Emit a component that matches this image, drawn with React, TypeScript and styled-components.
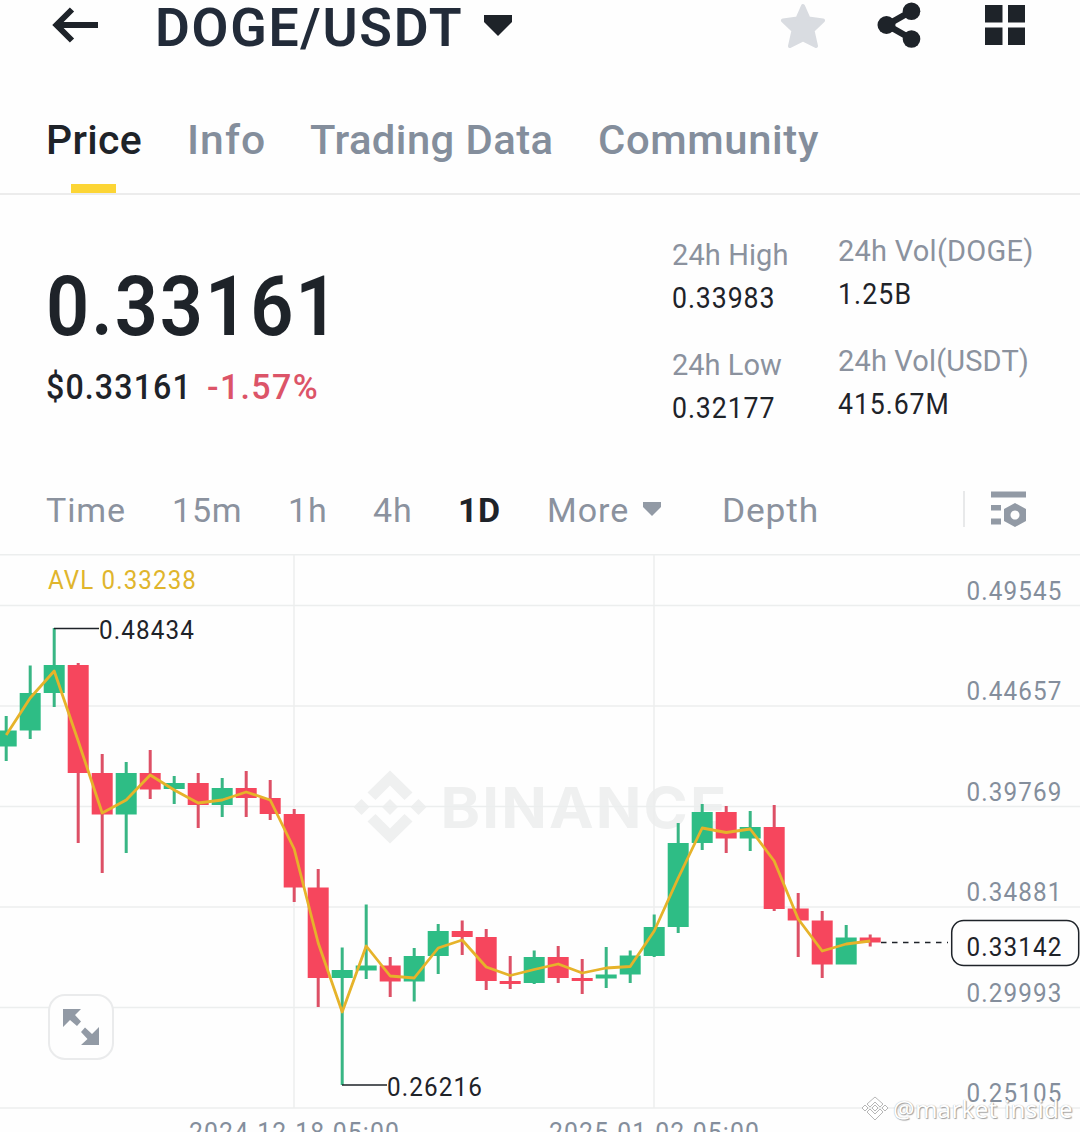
import React from "react";
import styled, { createGlobalStyle } from "styled-components";

const ink = "#1e2329";
const muted = "#848e9c";
const line = "#ececec";
const grid = "#eceeee";
const green = "#2ebd85";
const red = "#f6465d";
const amber = "#e6b32a";
const sans = `Roboto, "Liberation Sans", sans-serif`;

const GlobalStyle = createGlobalStyle`
  body {
    margin: 0;
    background: #fefefe;
    font-family: ${sans};
    color: ${ink};
  }
`;

const Screen = styled.main`
  display: flex;
  flex-direction: column;
  width: 1080px;
  height: 1132px;
  overflow: hidden;
  background: #fefefe;
`;

const Fit = styled.span<{ $sx?: number; $ls?: number }>`
  display: inline-block;
  white-space: nowrap;
  transform-origin: left center;
  transform: scaleX(${(p) => p.$sx ?? 1});
  letter-spacing: ${(p) => p.$ls ?? 0}px;
`;

const Header = styled.header`
  display: flex;
  align-items: center;
  height: 50px;
  padding: 0 54px 0 52px;
`;

const Title = styled.h1`
  width: 329px;
  margin: 6px 0 0 56px;
  font-size: 53px;
  line-height: 56px;
  font-weight: 600;
  color: #222b39;
`;

const Actions = styled.div`
  display: flex;
  align-items: center;
  margin-left: auto;
`;

const ActionIcon = styled.svg<{ $gap?: number }>`
  display: block;
  margin-left: ${(p) => p.$gap ?? 0}px;
`;

const Tabs = styled.nav`
  display: flex;
  height: 77px;
  padding: 66px 0 0 46px;
  border-bottom: 2px solid ${line};
`;

const Tab = styled.a<{ $w: number; $active?: boolean }>`
  position: relative;
  width: ${(p) => p.$w}px;
  font-size: 41px;
  line-height: 48px;
  font-weight: 500;
  color: ${(p) => (p.$active ? ink : muted)};
  &::after {
    content: "";
    display: ${(p) => (p.$active ? "block" : "none")};
    position: absolute;
    left: 25px;
    bottom: 0;
    width: 45px;
    height: 9px;
    background: #fcd535;
  }
`;

const Summary = styled.section`
  display: flex;
  height: 273px;
`;

const PriceBlock = styled.div`
  width: 626px;
  padding: 70px 0 0 46px;
`;

const LastPrice = styled.div`
  font-size: 84px;
  line-height: 84px;
  font-weight: 600;
`;

const SubPrice = styled.div`
  display: flex;
  margin-top: 19px;
  font-size: 35px;
  line-height: 40px;
  font-weight: 500;
`;

const Fiat = styled.span`
  width: 161px;
`;

const Change = styled.span`
  color: #dc5468;
`;

const StatColumn = styled.dl<{ $w: number; $top: number }>`
  width: ${(p) => p.$w}px;
  margin: 0;
  padding-top: ${(p) => p.$top}px;
  font-size: 29px;
  line-height: 34px;
`;

const StatLabel = styled.dt`
  color: #8b929e;
`;

const StatValue = styled.dd`
  margin: 9px 0 33px;
`;

const Intervals = styled.nav`
  display: flex;
  align-items: center;
  height: 84px;
  padding: 0 53px 2px 46px;
  font-size: 34px;
  line-height: 40px;
  color: #8b929e;
`;

const Interval = styled.a<{ $w: number; $active?: boolean }>`
  display: flex;
  align-items: center;
  width: ${(p) => p.$w}px;
  color: ${(p) => (p.$active ? ink : "inherit")};
  font-weight: ${(p) => (p.$active ? 700 : 400)};
`;

const MoreLabel = styled.span`
  width: 95px;
`;

const Settings = styled.div`
  display: flex;
  align-items: center;
  gap: 26px;
  margin: -2px 0 0 auto;
`;

const Divider = styled.span`
  width: 2px;
  height: 36px;
  background: #e8e9ea;
`;

const ChartArea = styled.section`
  position: relative;
  height: 578px;
  svg {
    display: block;
  }
`;

const ExpandButton = styled.button`
  position: absolute;
  left: 48px;
  top: 440px;
  display: flex;
  align-items: center;
  justify-content: center;
  width: 66px;
  height: 66px;
  padding: 0;
  border: 2px solid #eaebec;
  border-radius: 17px;
  background: #fefefe;
`;

const Credit = styled.div`
  position: absolute;
  left: 861px;
  top: 540px;
  display: flex;
  align-items: center;
  gap: 4px;
  font: 400 24px/30px "Noto Sans", sans-serif;
  color: #fff;
  text-shadow: 0 0 1px #a0a0a0, 1px 1px 1px #a0a0a0;
`;

type Candle = [high: number, low: number, top: number, bottom: number, up: 0 | 1, avg: number];

const candles: Candle[] = [
  [716, 761, 730.5, 746.5, 1, 735],
  [665.5, 739, 693, 730.5, 1, 698],
  [628, 707, 665, 693, 1, 671],
  [663, 843, 665, 773, 0, 741],
  [754, 873, 773, 814.5, 0, 813],
  [762, 853, 773, 814.5, 1, 800],
  [750, 799, 773, 789.5, 0, 775],
  [776, 804, 783, 789, 1, 790],
  [773, 828, 783, 805, 0, 803],
  [778, 817, 788, 805, 1, 800],
  [771, 817, 788, 798, 0, 792],
  [780, 820, 798, 814, 0, 800],
  [809, 902, 814, 887.5, 0, 849],
  [869, 1007, 887.5, 978, 0, 943],
  [947.5, 1085, 970, 978, 1, 1012],
  [904.5, 979, 965.5, 970.5, 1, 946],
  [957, 997, 965.5, 981.5, 0, 976],
  [948, 1001.5, 956, 981.5, 1, 978],
  [924, 974, 931, 956, 1, 948],
  [920.5, 955, 931, 937, 0, 940],
  [929, 990, 937, 981, 0, 967],
  [956, 989, 981, 984, 0, 975.5],
  [950.5, 984, 957, 983, 1, 969.5],
  [946, 983, 957, 978, 0, 964],
  [959, 994, 978, 981, 0, 973],
  [947, 988, 974.5, 978.5, 1, 968],
  [950.5, 983, 955.5, 974.5, 1, 966.5],
  [914.5, 957, 927, 956, 1, 931],
  [823, 933, 843, 927, 1, 878],
  [804, 850, 812, 843, 1, 828],
  [806, 853, 812, 838.5, 0, 832.5],
  [811, 851, 827, 838.5, 1, 829],
  [805, 911, 827, 909, 0, 861],
  [893, 957, 908.5, 920.5, 0, 919],
  [911, 978, 920.5, 964.5, 0, 951],
  [925, 964, 937.5, 964.5, 1, 944],
  [934.5, 946.5, 937.5, 942.5, 0, 941],
];

const cx = (i: number) => 6.2 + i * 24;

const axis: [string, number][] = [
  ["0.49545", 600],
  ["0.44657", 700],
  ["0.39769", 801],
  ["0.34881", 901],
  ["0.29993", 1002],
  ["0.25105", 1102],
];

const ChartText = styled.text<{ $fill: string }>`
  font: 400 26px ${sans};
  letter-spacing: 1.2px;
  fill: ${(p) => p.$fill};
`;

const Wordmark = styled.text`
  font: 700 56px Inter, sans-serif;
  letter-spacing: 2px;
  fill: #eff0f0;
`;

function Label({ x, y, w, fill, children }: { x: number; y: number; w: number; fill: string; children: string }) {
  return (
    <ChartText x={x} y={y} textLength={w} lengthAdjust="spacingAndGlyphs" $fill={fill}>
      {children}
    </ChartText>
  );
}

function BinanceMark({ fill }: { fill: string }) {
  return (
    <g fill={fill}>
      <path d="M0-36.500 22.500-14.500 14.500-7 0-21.500-14.500-7-22.500-14.500Z" />
      <path d="M0 36.500 22.500 14.500 14.500 7 0 21.500-14.500 7-22.500 14.500Z" />
      <path d="M0-8 8 0 0 8-8 0Z" />
      <path d="M-28.500-8-20.500 0-28.500 8-36.500 0ZM28.500-8 36.500 0 28.500 8 20.500 0Z" />
    </g>
  );
}

function CandleChart() {
  return (
    <svg width="1080" height="578" viewBox="0 554 1080 578">
      <g transform="translate(390 807)">
        <BinanceMark fill="#eff0f0" />
      </g>
      <Wordmark x="440.500" y="828" textLength="288" lengthAdjust="spacingAndGlyphs">
        BINANCE
      </Wordmark>
      <g stroke={grid} strokeWidth="1.500">
        {[554.7, 605.5, 706, 806.5, 907, 1007.5, 1108].map((y) => (
          <line key={y} x1="0" x2="1080" y1={y} y2={y} />
        ))}
        <line x1="294" x2="294" y1="554" y2="1108" />
        <line x1="654" x2="654" y1="554" y2="1108" />
      </g>
      {candles.map(([high, low, top, bottom, up], i) => (
        <g key={i}>
          <rect x={cx(i) - 1.5} y={high} width="3" height={low - high} fill={up ? "#38b684" : "#dd5066"} />
          <rect x={cx(i) - 10.5} y={top} width="21" height={bottom - top} fill={up ? green : red} />
        </g>
      ))}
      <polyline
        points={candles.map((c, i) => `${cx(i)},${c[5]}`).join(" ")}
        fill="none"
        stroke={amber}
        strokeWidth="2.800"
        strokeLinejoin="round"
      />
      <path d="M54 628.500H99M342 1085H387" stroke={ink} strokeWidth="1.500" fill="none" />
      <path d="M881 942.500H948" stroke={ink} strokeWidth="1.500" strokeDasharray="5.500 5.500" />
      <Label x={48} y={589} w={149} fill="#e0b52c">AVL 0.33238</Label>
      <Label x={99} y={639} w={96} fill={ink}>0.48434</Label>
      <Label x={387} y={1096} w={96} fill={ink}>0.26216</Label>
      {axis.map(([t, y]) => (
        <Label key={t} x={966.5} y={y} w={96} fill={muted}>{t}</Label>
      ))}
      <rect x="951.700" y="920.500" width="127" height="45" rx="12" fill="#fefefe" stroke={ink} strokeWidth="1.500" />
      <Label x={966.5} y={956} w={96} fill={ink}>0.33142</Label>
      <Label x={189} y={1141} w={211} fill={muted}>2024-12-18 05:00</Label>
      <Label x={549} y={1141} w={211} fill={muted}>2025-01-02 05:00</Label>
    </svg>
  );
}

export default function App() {
  return (
    <Screen>
      <GlobalStyle />
      <Header>
        <svg width="47" height="38" viewBox="52 6 47 38" fill="none" stroke={ink} strokeWidth="6">
          <path d="M72 9.500 56.500 25 72 40.500M57 25H98" />
        </svg>
        <Title>
          <Fit $sx={1.01} $ls={1.7}>DOGE/USDT</Fit>
        </Title>
        <svg width="28" height="22" viewBox="0 0 28 22">
          <path d="M0 1H28V8L14 22 0 8Z" fill={ink} />
        </svg>
        <Actions>
          <ActionIcon width="46" height="46" viewBox="0 0 46 46">
            <path
              d="M23 4 28.500 16.500 43 18.500 32.500 28.500 36 44 23 37.500 10 44 13.500 28.500 3 18.500 17.500 16.500Z"
              fill="#d9dce1"
              stroke="#d9dce1"
              strokeWidth="4"
              strokeLinejoin="round"
            />
          </ActionIcon>
          <ActionIcon $gap={51} width="44" height="46" viewBox="0 0 44 46" fill={ink}>
            <path d="M34.500 9 10 23 34.500 37" fill="none" stroke={ink} strokeWidth="6.500" />
            <circle cx="34.500" cy="9.200" r="8.800" />
            <circle cx="9.500" cy="23" r="9" />
            <circle cx="34.500" cy="37" r="8.800" />
          </ActionIcon>
          <ActionIcon $gap={63} width="42" height="42" viewBox="0 0 42 42" fill={ink}>
            <path d="M1 1H18.500V18.500H1ZM24 1H41V18.500H24ZM1 23.500H18.500V41H1ZM24 23.500H41V41H24Z" />
          </ActionIcon>
        </Actions>
      </Header>
      <Tabs>
        <Tab $w={141} $active><Fit $ls={0.3}>Price</Fit></Tab>
        <Tab $w={123}><Fit $sx={1.04} $ls={1}>Info</Fit></Tab>
        <Tab $w={288}><Fit $sx={1.02} $ls={0.4}>Trading Data</Fit></Tab>
        <Tab $w={230}><Fit $sx={1.02} $ls={0.6}>Community</Fit></Tab>
      </Tabs>
      <Summary>
        <PriceBlock>
          <LastPrice><Fit $sx={0.9} $ls={2.2}>0.33161</Fit></LastPrice>
          <SubPrice>
            <Fiat><Fit $sx={0.92} $ls={1.2}>$0.33161</Fit></Fiat>
            <Change><Fit $sx={0.97} $ls={1.4}>-1.57%</Fit></Change>
          </SubPrice>
        </PriceBlock>
        <StatColumn $w={166} $top={43}>
          <StatLabel><Fit $ls={0.1}>24h High</Fit></StatLabel>
          <StatValue><Fit $sx={0.92} $ls={1}>0.33983</Fit></StatValue>
          <StatLabel><Fit>24h Low</Fit></StatLabel>
          <StatValue><Fit $sx={0.92} $ls={1}>0.32177</Fit></StatValue>
        </StatColumn>
        <StatColumn $w={230} $top={39}>
          <StatLabel><Fit $ls={0.25}>24h Vol(DOGE)</Fit></StatLabel>
          <StatValue><Fit $sx={0.92} $ls={1.2}>1.25B</Fit></StatValue>
          <StatLabel><Fit $ls={0.15}>24h Vol(USDT)</Fit></StatLabel>
          <StatValue><Fit $sx={0.92} $ls={1}>415.67M</Fit></StatValue>
        </StatColumn>
      </Summary>
      <Intervals>
        <Interval $w={126}><Fit $ls={0.9}>Time</Fit></Interval>
        <Interval $w={116}><Fit $ls={0.8}>15m</Fit></Interval>
        <Interval $w={85}><Fit $ls={0.8}>1h</Fit></Interval>
        <Interval $w={85}><Fit $ls={0.8}>4h</Fit></Interval>
        <Interval $w={89} $active><Fit $ls={0.5}>1D</Fit></Interval>
        <Interval $w={175}>
          <MoreLabel><Fit $ls={1}>More</Fit></MoreLabel>
          <svg width="20" height="16" viewBox="0 0 20 16">
            <path d="M1 0H19V5L10 14 1 5Z" fill="#929aa5" />
          </svg>
        </Interval>
        <Interval $w={110}><Fit $sx={1.04} $ls={0.8}>Depth</Fit></Interval>
        <Settings>
          <Divider />
          <svg width="36" height="36" viewBox="0 0 36 36" fill="#929aa5">
            <path d="M0 .500H35V6.500H0ZM0 14H10V19.500H0ZM0 27.500H10V33.500H0Z" />
            <path fillRule="evenodd" d="M24 12 35 18V30L24 36 13 30V18ZM24 19.500a4.500 4.500 0 1 0 .010 0Z" />
          </svg>
        </Settings>
      </Intervals>
      <ChartArea>
        <CandleChart />
        <ExpandButton>
          <svg width="36" height="36" viewBox="0 0 36 36" fill="#929aa5">
            <path d="M0 0H18L12 6 18 12.500 14 17 7 11 0 18ZM36 36H18L24.500 30 18 23 22 18.500 29 25 36 18Z" />
          </svg>
        </ExpandButton>
        <Credit>
          <svg width="28" height="28" viewBox="-14 -13 28 28" fill="#fff" stroke="#a5a5a5" strokeWidth=".8">
            <path d="M0-11 8-4 5-1 0-6-5-1-8-4ZM0 12 8 4 5 1 0 6-5 1-8 4ZM0-3 3 0 0 3-3 0ZM-10-3-7 0-10 3-13 0ZM10-3 13 0 10 3 7 0Z" />
          </svg>
          <Fit $ls={0.3}>@market inside</Fit>
        </Credit>
      </ChartArea>
    </Screen>
  );
}
